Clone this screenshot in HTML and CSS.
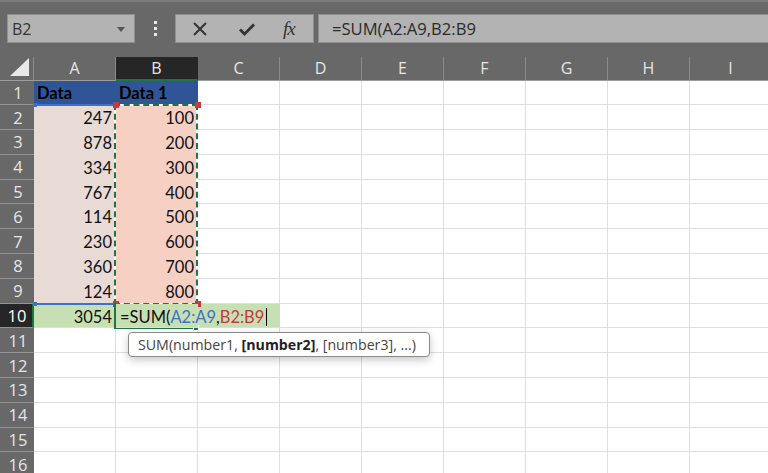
FILE: index.html
```html
<!DOCTYPE html>
<html>
<head>
<meta charset="utf-8">
<link rel="stylesheet" href="styles.css">
</head>
<body>
<div class="app">
  <div class="toolbar">
    <div class="namebox"><span>B2</span><svg class="dd" width="8" height="5" viewBox="0 0 8 5"><path d="M0 0h8L4 5z" fill="#555"/></svg></div>
    <div class="grip"><i></i><i></i><i></i></div>
    <div class="fbtns">
      <svg width="16" height="16" viewBox="0 0 16 16"><path d="M2 2L14 14M14 2L2 14" stroke="#333" stroke-width="2" fill="none"/></svg>
      <svg width="18" height="16" viewBox="0 0 18 16"><path d="M2 8.5L6.5 13L16 3.5" stroke="#333" stroke-width="2.8" fill="none"/></svg>
      <span class="fx">fx</span>
    </div>
    <div class="finput">=SUM(A2:A9,B2:B9</div>
  </div>
  <div class="sheet">
    <div class="grid">
      <div class="corner"><svg width="20" height="19" viewBox="0 0 20 19"><path d="M19 0V18H0z" fill="#e8e8e8"/></svg></div>
      <div class="ch">A</div><div class="ch selc">B</div><div class="ch">C</div><div class="ch">D</div><div class="ch">E</div><div class="ch">F</div><div class="ch">G</div><div class="ch">H</div><div class="ch">I</div>

      <div class="rh">1</div><div class="c h1">Data</div><div class="c h1">Data 1</div><div class="c"></div><div class="c"></div><div class="c"></div><div class="c"></div><div class="c"></div><div class="c"></div><div class="c"></div>
      <div class="rh">2</div><div class="c a n">247</div><div class="c b n">100</div><div class="c"></div><div class="c"></div><div class="c"></div><div class="c"></div><div class="c"></div><div class="c"></div><div class="c"></div>
      <div class="rh">3</div><div class="c a n">878</div><div class="c b n">200</div><div class="c"></div><div class="c"></div><div class="c"></div><div class="c"></div><div class="c"></div><div class="c"></div><div class="c"></div>
      <div class="rh">4</div><div class="c a n">334</div><div class="c b n">300</div><div class="c"></div><div class="c"></div><div class="c"></div><div class="c"></div><div class="c"></div><div class="c"></div><div class="c"></div>
      <div class="rh">5</div><div class="c a n">767</div><div class="c b n">400</div><div class="c"></div><div class="c"></div><div class="c"></div><div class="c"></div><div class="c"></div><div class="c"></div><div class="c"></div>
      <div class="rh">6</div><div class="c a n">114</div><div class="c b n">500</div><div class="c"></div><div class="c"></div><div class="c"></div><div class="c"></div><div class="c"></div><div class="c"></div><div class="c"></div>
      <div class="rh">7</div><div class="c a n">230</div><div class="c b n">600</div><div class="c"></div><div class="c"></div><div class="c"></div><div class="c"></div><div class="c"></div><div class="c"></div><div class="c"></div>
      <div class="rh">8</div><div class="c a n">360</div><div class="c b n">700</div><div class="c"></div><div class="c"></div><div class="c"></div><div class="c"></div><div class="c"></div><div class="c"></div><div class="c"></div>
      <div class="rh">9</div><div class="c a n">124</div><div class="c b n">800</div><div class="c"></div><div class="c"></div><div class="c"></div><div class="c"></div><div class="c"></div><div class="c"></div><div class="c"></div>
      <div class="rh selr">10</div><div class="c g n">3054</div><div class="c g ed"><span>=SUM(<span class="ref-a">A2:A9</span>,<span class="ref-b">B2:B9</span></span><span class="caret"></span></div><div class="c g"></div><div class="c"></div><div class="c"></div><div class="c"></div><div class="c"></div><div class="c"></div><div class="c"></div>
      <div class="rh">11</div><div class="c"></div><div class="c"></div><div class="c"></div><div class="c"></div><div class="c"></div><div class="c"></div><div class="c"></div><div class="c"></div><div class="c"></div>
      <div class="rh">12</div><div class="c"></div><div class="c"></div><div class="c"></div><div class="c"></div><div class="c"></div><div class="c"></div><div class="c"></div><div class="c"></div><div class="c"></div>
      <div class="rh">13</div><div class="c"></div><div class="c"></div><div class="c"></div><div class="c"></div><div class="c"></div><div class="c"></div><div class="c"></div><div class="c"></div><div class="c"></div>
      <div class="rh">14</div><div class="c"></div><div class="c"></div><div class="c"></div><div class="c"></div><div class="c"></div><div class="c"></div><div class="c"></div><div class="c"></div><div class="c"></div>
      <div class="rh">15</div><div class="c"></div><div class="c"></div><div class="c"></div><div class="c"></div><div class="c"></div><div class="c"></div><div class="c"></div><div class="c"></div><div class="c"></div>
      <div class="rh">16</div><div class="c"></div><div class="c"></div><div class="c"></div><div class="c"></div><div class="c"></div><div class="c"></div><div class="c"></div><div class="c"></div><div class="c"></div>
    </div>

    <div class="rng-a"></div>
    <div class="sq blue" style="left:33px;top:46px"></div>
    <div class="sq blue" style="left:33px;top:245px"></div>
    <div class="rng-b"></div>
    <div class="sq red" style="left:113px;top:45px"></div>
    <div class="sq red" style="left:195px;top:45px"></div>
    <div class="sq red" style="left:113px;top:244px"></div>
    <div class="sq red" style="left:195px;top:244px"></div>
    <div class="active"></div>
    <div class="handle"></div>
    <div class="tip">SUM(number1, <b>[number2]</b>, [number3], ...)</div>
  </div>
</div>
</body>
</html>
```
FILE: styles.css
```css
* { box-sizing: border-box; }
html, body { margin: 0; padding: 0; }
body { width: 768px; height: 473px; overflow: hidden; background: #fff; }
.app { width: 768px; height: 473px; overflow: hidden; }

.toolbar {
  height: 57px;
  background: #686868;
  border-top: 2px solid #7c7c7c;
  padding-top: 12px;
  display: flex;
  align-items: flex-start;
  font-family: "Open Sans", sans-serif;
}
.namebox {
  margin-left: 7px;
  width: 128px;
  height: 29px;
  background: #b3b3b3;
  border: 1px solid #8f8f8f;
  display: flex;
  align-items: center;
  justify-content: space-between;
  padding: 0 9px 0 4px;
  font-size: 16px;
  color: #333;
}
.namebox .dd { margin-top: 1px; }
.grip {
  width: 40px;
  height: 29px;
  display: flex;
  flex-direction: column;
  align-items: center;
  justify-content: center;
  gap: 3px;
}
.grip i { display: block; width: 3px; height: 3px; background: #e8e8e8; }
.fbtns {
  width: 139px;
  height: 29px;
  background: #b3b3b3;
  border: 1px solid #8f8f8f;
  display: flex;
  align-items: center;
  padding-left: 16px;
}
.fbtns svg:first-child { margin-right: 30px; }
.fbtns svg:nth-child(2) { margin-right: 27px; }
.fx {
  font-family: "Liberation Serif", serif;
  font-style: italic;
  font-size: 19px;
  color: #333;
  letter-spacing: -1px;
}
.finput {
  margin-left: 4px;
  flex: 1;
  height: 29px;
  background: #b3b3b3;
  border: 1px solid #8f8f8f;
  border-right: none;
  padding-left: 13px;
  font-size: 16.6px;
  line-height: 27px;
  color: #2a2a2a;
}

.sheet { position: relative; height: 416px; overflow: hidden; }
.grid {
  display: grid;
  grid-template-columns: 34px repeat(9, 82px);
  grid-template-rows: 23.5px repeat(16, 24.8px);
  width: 772px;
}
.corner {
  background: #686868;
  border-right: 1px solid #8a8a8a;
  border-bottom: 1px solid #9c9c9c;
  display: flex;
  align-items: flex-end;
  justify-content: flex-end;
  padding: 0 3px 3px 0;
}
.ch {
  background: #686868;
  border-right: 1px solid #8a8a8a;
  border-bottom: 1px solid #9c9c9c;
  color: #e6e6e6;
  font-family: "Open Sans", sans-serif;
  font-size: 16px;
  display: flex;
  align-items: center;
  justify-content: center;
}
.ch.selc { background: #262626; border-bottom: 2px solid #217346; border-right-color: #262626; }
.rh {
  background: #686868;
  border-bottom: 1px solid #939393;
  color: #e6e6e6;
  font-family: "Open Sans", sans-serif;
  font-size: 16.5px;
  display: flex;
  align-items: center;
  justify-content: center;
  padding-left: 2px;
}
.rh.selr { background: #262626; border-right: 2px solid #217346; color: #fff; }
.c {
  background: #fff;
  border-right: 1px solid #dedede;
  border-bottom: 1px solid #dedede;
  font-family: "Lato", sans-serif;
  font-size: 16.5px;
  color: #111;
  display: flex;
  align-items: center;
  padding: 2px 3px 0 3px;
  white-space: nowrap;
}
.c.n { justify-content: flex-end; }
.c.h1 { background: #2f5597; border-color: #2f5597; font-weight: bold; color: #000; }
.c.a { background: #e8dad5; border-color: #e8dad5; }
.c.b { background: #f6d0c3; border-color: #f6d0c3; }
.c.g { background: #c6e0b4; border-color: #c6e0b4; border-bottom-color: #dedede; }
.c.ed { position: relative; z-index: 1; overflow: visible; padding-left: 4px; }
.ref-a { color: #3f72c4; }
.ref-b { color: #c8383c; }
.caret { display: block; flex: none; width: 1px; height: 18px; background: #000; margin-left: 2px; }

.rng-a {
  position: absolute;
  left: 34px; top: 46.5px;
  width: 82px; height: 201px;
  border-top: 2px solid #3f72c4;
  border-bottom: 2px solid #3f72c4;
}
.rng-b {
  position: absolute;
  left: 114px; top: 46.5px;
  width: 84px; height: 201px;
  border: 2px solid #fff;
}
.rng-b::before {
  content: "";
  position: absolute;
  inset: -2px;
  border: 2px dashed #217346;
}
.sq { position: absolute; width: 6px; height: 6px; }
.sq.blue { width: 4px; height: 4px; background: #3f72c4; }
.sq.red { background: #c8383c; }
.active {
  position: absolute;
  left: 114px; top: 246px;
  width: 82px; height: 26px;
  border-left: 2px solid #217346;
  border-bottom: 2px solid #217346;
}
.handle {
  position: absolute;
  left: 193px; top: 268px;
  width: 6px; height: 6px;
  background: #217346;
  border: 1px solid #fff;
}
.tip {
  position: absolute;
  left: 128px; top: 275px;
  width: 302px; height: 25px;
  background: #fff;
  border: 1px solid #8a8a8a;
  border-radius: 4px;
  box-shadow: 0 3px 8px rgba(0,0,0,0.22);
  font-family: "Open Sans", sans-serif;
  font-size: 14.2px;
  color: #444;
  padding-left: 9px;
  line-height: 23px;
  white-space: nowrap;
}
.tip b { color: #222; }
```
